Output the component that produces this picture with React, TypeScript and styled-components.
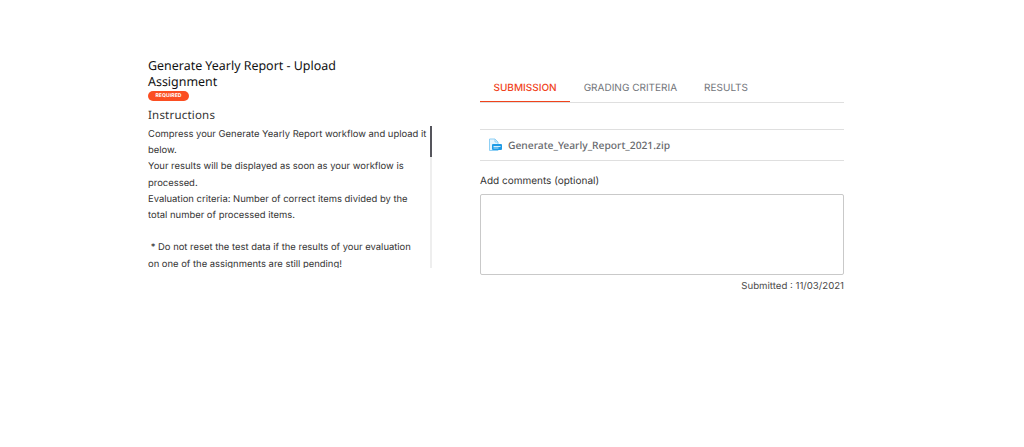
import { FC } from "react";
import styled, { createGlobalStyle } from "styled-components";

const GlobalStyle = createGlobalStyle`
  html, body {
    margin: 0;
    padding: 0;
    background: #fff;
  }
  body {
    font-family: "Inter", "Liberation Sans", sans-serif;
    color: #2b2b2b;
    text-rendering: geometricPrecision;
  }
`;

const Page = styled.div`
  width: 1024px;
  height: 447px;
  box-sizing: border-box;
  padding: 57px 0 0 148px;
  display: flex;
  align-items: flex-start;
  gap: 48px;
  overflow: hidden;
`;

const LeftColumn = styled.section`
  width: 284px;
  display: flex;
  flex-direction: column;
`;

const Title = styled.h1`
  margin: 0 0 0.5px;
  padding-top: 0.5px;
  width: 200px;
  font-family: "Noto Sans", sans-serif;
  font-size: 12.45px;
  line-height: 16.5px;
  font-weight: 400;
  color: #111;
`;

const Badge = styled.span`
  align-self: flex-start;
  width: 41px;
  height: 10px;
  border-radius: 5px;
  background: #fb4e22;
  color: #fff;
  font-size: 5px;
  line-height: 10px;
  font-weight: 700;
  text-align: center;
  letter-spacing: 0.1px;
`;

const SectionTitle = styled.h2`
  margin: 5px 0 0;
  font-family: "Noto Sans", sans-serif;
  font-size: 11.5px;
  line-height: 20px;
  font-weight: 400;
  letter-spacing: 0.2px;
  color: #333;
`;

const ScrollBox = styled.div`
  height: 142px;
  display: flex;
  justify-content: space-between;
`;

const Instructions = styled.div`
  width: 282px;
  box-sizing: border-box;
  padding-top: 1px;
  overflow: hidden;
  font-size: 9.43px;
  line-height: 16.2px;
  color: #333;
`;

const Line = styled.div`
  min-height: 16.2px;
  white-space: pre-wrap;
`;

const Track = styled.div`
  width: 2px;
  height: 100%;
  background: #eeeeee;
`;

const Thumb = styled.div`
  height: 31px;
  background: #55555c;
`;

const RightColumn = styled.section`
  width: 364px;
  margin-top: 16px;
  display: flex;
  flex-direction: column;
`;

const Tabs = styled.nav`
  display: flex;
  height: 29px;
  border-bottom: 1px solid #dfdfdf;
`;

const Tab = styled.div<{ $active?: boolean }>`
  padding: 0 13.5px;
  margin-bottom: -1px;
  font-size: 10px;
  line-height: 30px;
  height: 29px;
  box-sizing: border-box;
  color: ${(p) => (p.$active ? "#f0431c" : "#72757a")};
  font-weight: ${(p) => (p.$active ? 500 : 400)};
  border-bottom: 1px solid ${(p) => (p.$active ? "#f0431c" : "transparent")};
`;

const FileRow = styled.div`
  margin-top: 26px;
  height: 30px;
  display: flex;
  align-items: center;
  gap: 6px;
  padding-left: 8px;
  border-top: 1px solid #dfdfdf;
  border-bottom: 1px solid #dfdfdf;
`;

const FileName = styled.span`
  margin-top: 2px;
  font-family: "Noto Sans", sans-serif;
  font-size: 10.25px;
  font-weight: 500;
  color: #66686c;
`;

const CommentLabel = styled.label`
  margin-top: 13px;
  font-size: 10px;
  line-height: 14px;
  color: #333;
`;

const CommentBox = styled.textarea`
  margin-top: 6px;
  width: 100%;
  height: 81px;
  box-sizing: border-box;
  border: 1px solid #c9c9c9;
  border-radius: 2px;
  background: #fff;
  resize: none;
  outline: none;
  display: block;
`;

const Submitted = styled.div`
  margin-top: 5px;
  text-align: right;
  font-size: 9.65px;
  line-height: 14px;
  color: #4a4a4a;
`;

const ZipIcon: FC = () => (
  <svg width="14" height="14" viewBox="0 0 14 14" aria-hidden="true">
    <path d="M1.5 1h5.5l3 3v8.5h-8.5z" fill="#e8f5fd" stroke="#8fd0f5" strokeWidth="1" />
    <path d="M7 1v3h3" fill="none" stroke="#8fd0f5" strokeWidth="1" />
    <rect x="4" y="6" width="10" height="6" rx="1" fill="#1f9be6" />
    <rect x="5.5" y="8" width="7" height="1" fill="#d5eefc" />
    <rect x="5.5" y="9.6" width="5" height="0.8" fill="#d5eefc" />
  </svg>
);

const lines = [
  "Compress your Generate Yearly Report workflow and upload it\nbelow.",
  "Your results will be displayed as soon as your workflow is\nprocessed.",
  "Evaluation criteria: Number of correct items divided by the\ntotal number of processed items.",
  "",
  " * Do not reset the test data if the results of your evaluation\non one of the assignments are still pending!",
];

const App: FC = () => {
  return (
    <>
      <GlobalStyle />
      <Page>
        <LeftColumn>
          <Title>Generate Yearly Report - Upload Assignment</Title>
          <Badge>REQUIRED</Badge>
          <SectionTitle>Instructions</SectionTitle>
          <ScrollBox>
            <Instructions>
              {lines.map((line, i) => (
                <Line key={i}>{line}</Line>
              ))}
            </Instructions>
            <Track>
              <Thumb />
            </Track>
          </ScrollBox>
        </LeftColumn>
        <RightColumn>
          <Tabs>
            <Tab $active>SUBMISSION</Tab>
            <Tab>GRADING CRITERIA</Tab>
            <Tab>RESULTS</Tab>
          </Tabs>
          <FileRow>
            <ZipIcon />
            <FileName>Generate_Yearly_Report_2021.zip</FileName>
          </FileRow>
          <CommentLabel>Add comments (optional)</CommentLabel>
          <CommentBox />
          <Submitted>Submitted : 11/03/2021</Submitted>
        </RightColumn>
      </Page>
    </>
  );
};

export default App;
